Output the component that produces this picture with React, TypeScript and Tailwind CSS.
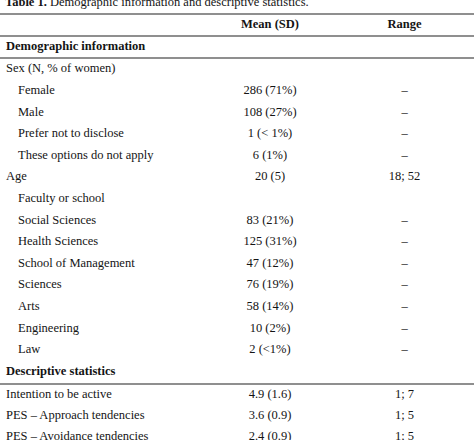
const rows1 = [
  { label: "Sex (N, % of women)", indent: false, mean: "", range: "" },
  { label: "Female", indent: true, mean: "286 (71%)", range: "–" },
  { label: "Male", indent: true, mean: "108 (27%)", range: "–" },
  { label: "Prefer not to disclose", indent: true, mean: "1 (< 1%)", range: "–" },
  { label: "These options do not apply", indent: true, mean: "6 (1%)", range: "–" },
  { label: "Age", indent: false, mean: "20 (5)", range: "18; 52" },
  { label: "Faculty or school", indent: true, mean: "", range: "" },
  { label: "Social Sciences", indent: true, mean: "83 (21%)", range: "–" },
  { label: "Health Sciences", indent: true, mean: "125 (31%)", range: "–" },
  { label: "School of Management", indent: true, mean: "47 (12%)", range: "–" },
  { label: "Sciences", indent: true, mean: "76 (19%)", range: "–" },
  { label: "Arts", indent: true, mean: "58 (14%)", range: "–" },
  { label: "Engineering", indent: true, mean: "10 (2%)", range: "–" },
  { label: "Law", indent: true, mean: "2 (<1%)", range: "–" },
];

const rows2 = [
  { label: "Intention to be active", mean: "4.9 (1.6)", range: "1; 7" },
  { label: "PES – Approach tendencies", mean: "3.6 (0.9)", range: "1; 5" },
  { label: "PES – Avoidance tendencies", mean: "2.4 (0.9)", range: "1; 5" },
];

const Rule = () => <div className="h-[2px] w-full bg-[#8f8f8f]" />;

export default function App() {
  return (
    <div
      className="h-[440px] w-[474px] overflow-hidden bg-white text-[12.5px] text-[#141414]"
      style={{ fontFamily: '"Liberation Serif", "Times New Roman", serif' }}
    >
      {/* caption, clipped at the top */}
      <div className="-mt-[6px] h-[16px] pl-[5px] leading-[16px]">
        <span className="font-bold">Table 1.</span> Demographic information and descriptive statistics.
      </div>
      <div className="h-[3px]" />
      <Rule />

      {/* header */}
      <div className="grid h-[20px] grid-cols-[205px_130px_139px] items-center pb-[2px] font-bold">
        <div />
        <div className="text-center">Mean (SD)</div>
        <div className="text-center">Range</div>
      </div>
      <Rule />

      <div className="flex h-[20px] items-center pb-[2px] pl-[6px] font-bold">Demographic information</div>
      <Rule />

      {rows1.map((r, i) => (
        <div key={i} className="grid h-[21.6px] grid-cols-[205px_130px_139px] items-center pb-[2px]">
          <div className={r.indent ? "pl-[18px]" : "pl-[6px]"}>{r.label}</div>
          <div className="text-center">{r.mean}</div>
          <div className="text-center">{r.range}</div>
        </div>
      ))}
      <div className="flex h-[21.6px] items-center pb-[2px] pl-[6px] font-bold">Descriptive statistics</div>
      <Rule />

      {rows2.map((r, i) => (
        <div key={i} className="grid h-[21px] grid-cols-[205px_130px_139px] items-center pb-[4px]">
          <div className="pl-[6px]">{r.label}</div>
          <div className="text-center">{r.mean}</div>
          <div className="text-center">{r.range}</div>
        </div>
      ))}
    </div>
  );
}
